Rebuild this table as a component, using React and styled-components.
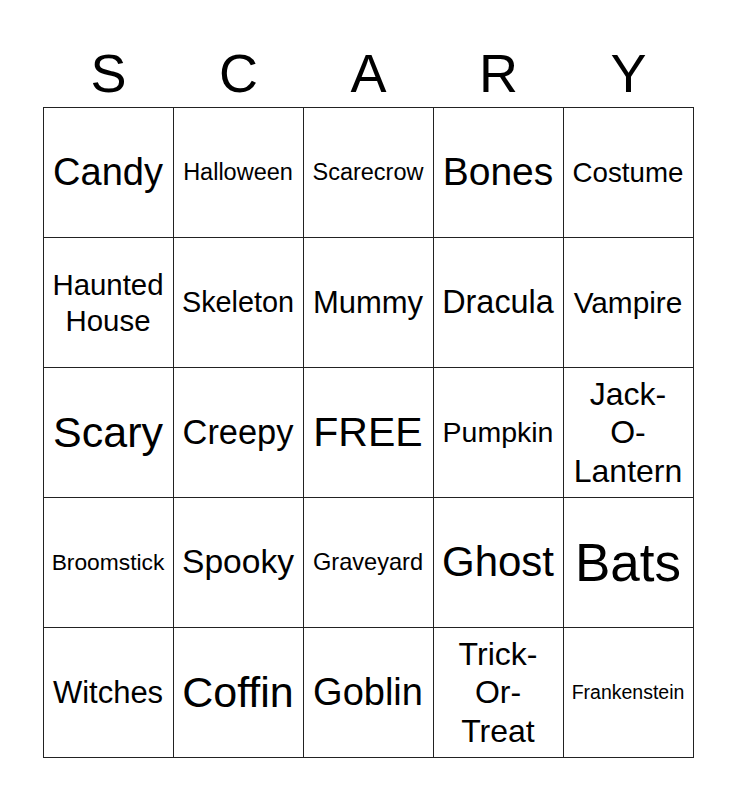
import { createGlobalStyle, styled } from "styled-components";

const GlobalStyle = createGlobalStyle`
    html, body {
        margin: 0;
        padding: 0;
        background: #fff;
    }
    body {
        font-family: "Liberation Sans", Arial, sans-serif;
        color: #000;
    }
`;

const Page = styled.div`
    display: flex;
    flex-direction: column;
    align-items: center;
    padding-top: 43px;
`;

const Header = styled.div`
    display: grid;
    grid-template-columns: repeat(5, 130px);
    width: 651px;
    padding-left: 1px;
    box-sizing: border-box;
`;

const Letter = styled.div`
    text-align: center;
    font-size: 54px;
    line-height: 60px;
    height: 64px;
`;

const Board = styled.div`
    display: grid;
    grid-template-columns: repeat(5, 130px);
    grid-auto-rows: 130px;
    border-top: 1px solid #222;
    border-left: 1px solid #222;
`;

const Cell = styled.div`
    box-sizing: border-box;
    border-right: 1px solid #222;
    border-bottom: 1px solid #222;
    display: flex;
    flex-direction: column;
    align-items: center;
    justify-content: center;
    text-align: center;
    padding: 0 4px;
    font-size: ${(p) => p.$size}px;
    line-height: 1.2;
    white-space: nowrap;
    overflow: hidden;
`;

const letters = ["S", "C", "A", "R", "Y"];

const cells = [
    { lines: ["Candy"], size: 38 },
    { lines: ["Halloween"], size: 23.5 },
    { lines: ["Scarecrow"], size: 23.5 },
    { lines: ["Bones"], size: 39 },
    { lines: ["Costume"], size: 27.7 },

    { lines: ["Haunted", "House"], size: 29.4 },
    { lines: ["Skeleton"], size: 28.8 },
    { lines: ["Mummy"], size: 31 },
    { lines: ["Dracula"], size: 32.4 },
    { lines: ["Vampire"], size: 29.8 },

    { lines: ["Scary"], size: 43 },
    { lines: ["Creepy"], size: 34.4 },
    { lines: ["FREE"], size: 41 },
    { lines: ["Pumpkin"], size: 28.5 },
    { lines: ["Jack-", "O-", "Lantern"], size: 32 },

    { lines: ["Broomstick"], size: 22.8 },
    { lines: ["Spooky"], size: 33.6 },
    { lines: ["Graveyard"], size: 23.6 },
    { lines: ["Ghost"], size: 42 },
    { lines: ["Bats"], size: 53 },

    { lines: ["Witches"], size: 31 },
    { lines: ["Coffin"], size: 43 },
    { lines: ["Goblin"], size: 38 },
    { lines: ["Trick-", "Or-", "Treat"], size: 32 },
    { lines: ["Frankenstein"], size: 19.5 },
];

export default function App() {
    return (
        <>
            <GlobalStyle />
            <Page>
                <Header>
                    {letters.map((l) => (
                        <Letter key={l}>{l}</Letter>
                    ))}
                </Header>
                <Board>
                    {cells.map((c, i) => (
                        <Cell key={i} $size={c.size}>
                            {c.lines.map((line) => (
                                <span key={line}>{line}</span>
                            ))}
                        </Cell>
                    ))}
                </Board>
            </Page>
        </>
    );
}
